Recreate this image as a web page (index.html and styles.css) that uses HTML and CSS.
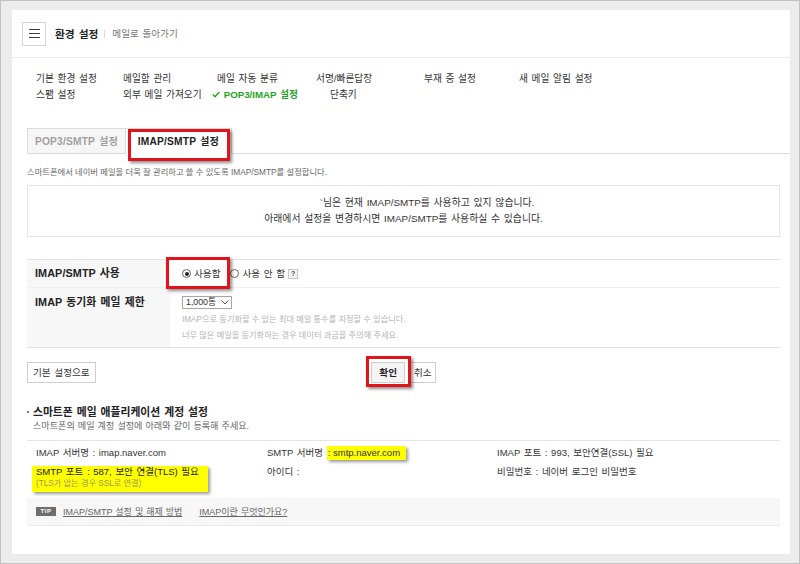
FILE: index.html
```html
<!DOCTYPE html>
<html lang="ko">
<head>
<meta charset="utf-8">
<title>환경 설정</title>
<link rel="stylesheet" href="styles.css">
</head>
<body>
<div class="panel">
  <header class="top">
    <button class="menu-btn" type="button"><span></span><span></span><span></span></button>
    <h1 class="title">환경 설정</h1>
    <span class="sep"></span>
    <a class="back" href="#">메일로 돌아가기</a>
  </header>

  <nav class="gnb">
    <div class="gnb-row">
      <a href="#">기본 환경 설정</a>
      <a href="#">메일함 관리</a>
      <a href="#">메일 자동 분류</a>
      <a href="#">서명/빠른답장</a>
      <a href="#">부재 중 설정</a>
      <a href="#">새 메일 알림 설정</a>
    </div>
    <div class="gnb-row">
      <a href="#">스팸 설정</a>
      <a href="#">외부 메일 가져오기</a>
      <a href="#" class="on"><svg class="chk" width="8" height="7" viewBox="0 0 8 7"><polyline points="0.8,3.6 3,5.8 7.3,1" fill="none" stroke="#1ea51e" stroke-width="1.4"/></svg> POP3/IMAP 설정</a>
      <a href="#" class="shift">단축키</a>
    </div>
  </nav>

  <main class="main">
    <div class="tabs">
      <a href="#" class="tab">POP3/SMTP 설정</a>
      <a href="#" class="tab active">IMAP/SMTP 설정<span class="annot annot-tab"></span></a>
    </div>

    <p class="desc">스마트폰에서 네이버 메일을 더욱 잘 관리하고 쓸 수 있도록 IMAP/SMTP를 설정합니다.</p>

    <div class="notice">
      <p><span class="name-mask"></span>`님은 현재 IMAP/SMTP를 사용하고 있지 않습니다.</p>
      <p>아래에서 설정을 변경하시면 IMAP/SMTP를 사용하실 수 있습니다.</p>
    </div>

    <div class="settings">
      <div class="row r1">
        <div class="th">IMAP/SMTP 사용</div>
        <div class="td">
          <label class="radio"><span class="rb checked"></span>사용함</label>
          <label class="radio radio-off"><span class="rb"></span>사용 안 함</label>
          <span class="help">?</span>
          <span class="annot annot-radio"></span>
        </div>
      </div>
      <div class="row r2">
        <div class="th">IMAP 동기화 메일 제한</div>
        <div class="td">
          <div class="select"><span>1,000통</span><svg width="8" height="5" viewBox="0 0 8 5"><polyline points="0.5,0.5 4,4 7.5,0.5" fill="none" stroke="#555" stroke-width="1"/></svg></div>
          <p class="hint">IMAP으로 동기화할 수 있는 최대 메일 통수를 지정할 수 있습니다.<br>너무 많은 메일을 동기화하는 경우 데이터 과금을 주의해 주세요.</p>
        </div>
      </div>
    </div>

    <div class="btns">
      <button type="button" class="btn btn-reset">기본 설정으로</button>
      <div class="btn-group">
        <button type="button" class="btn btn-ok">확인<span class="annot annot-ok"></span></button>
        <button type="button" class="btn btn-cancel">취소</button>
      </div>
    </div>

    <h2 class="sec-title"><span class="dot"></span>스마트폰 메일 애플리케이션 계정 설정</h2>
    <p class="sec-sub">스마트폰의 메일 계정 설정에 아래와 같이 등록해 주세요.</p>

    <div class="acct">
      <div>IMAP 서버명 : imap.naver.com</div>
      <div>SMTP 서버명 <span class="hl">: smtp.naver.com</span></div>
      <div>IMAP 포트 : 993, 보안연결(SSL) 필요</div>
      <div class="hl-block">SMTP 포트 : 587, 보안 연결(TLS) 필요<small>(TLS가 없는 경우 SSL로 연결)</small></div>
      <div class="lower">아이디 :</div>
      <div class="lower">비밀번호 : 네이버 로그인 비밀번호</div>
    </div>

    <div class="tip">
      <span class="badge">TIP</span>
      <a href="#">IMAP/SMTP 설정 및 해제 방법</a>
      <a href="#">IMAP이란 무엇인가요?</a>
    </div>
  </main>
</div>
</body>
</html>
```

FILE: styles.css
```css
* { box-sizing: border-box; }
html { background: #ececec; }
body {
  margin: 0;
  width: 800px;
  height: 564px;
  border: 1px solid #c2c2c2;
  background: #ececec;
  padding: 9px 9px 9px 11px;
  font-family: "Liberation Sans", "Noto Sans CJK KR", sans-serif;
  font-size: 9.6px;
  line-height: 14px;
  color: #2c2c2c;
  word-spacing: 1px;
}
a { color: inherit; text-decoration: none; }
p, h1, h2 { margin: 0; }

.panel { background: #fff; height: 100%; }

/* header */
.top {
  height: 48px;
  border-bottom: 1px solid #ececec;
  display: flex;
  align-items: center;
  padding-left: 10px;
}
.menu-btn {
  width: 24px;
  height: 24px;
  border: 1px solid #d6d6d6;
  background: #fff;
  padding: 0;
  display: flex;
  flex-direction: column;
  justify-content: center;
  align-items: center;
  gap: 3px;
}
.menu-btn span { display: block; width: 11px; height: 1px; background: #3c3c3c; }
.title { font-size: 10.7px; font-weight: bold; color: #222; margin-left: 9px; }
.sep { width: 1px; height: 8px; background: #d8d8d8; margin: 0 7px 0 6px; }
.back { color: #777; }

/* nav */
.gnb { padding: 13px 0 0 24px; line-height: 16px; font-size: 9.7px; color: #333; }
.gnb-row { display: grid; grid-template-columns: 87px 94px 99px 108px 95px auto; }
.gnb .on { color: #1ea51e; font-weight: bold; margin-left: -5px; white-space: nowrap; }
.gnb .chk { vertical-align: 0; }
.gnb .shift { margin-left: 14px; }

/* main */
.main { padding: 0 10px 0 15px; }

.tabs {
  display: flex;
  align-items: flex-end;
  height: 26px;
  border-bottom: 1px solid #dcdcdc;
  margin: 25px -10px 0 0;
}
.tab {
  width: 99px;
  height: 25px;
  border: 1px solid #dcdcdc;
  border-bottom: none;
  background: #f6f6f6;
  color: #a0a0a0;
  font-size: 10.2px;
  font-weight: bold;
  letter-spacing: .2px;
  text-align: center;
  line-height: 25px;
  white-space: nowrap;
}
.tab.active {
  width: 107px;
  height: 26px;
  margin-left: -1px;
  margin-bottom: -1px;
  background: #fff;
  color: #222;
  position: relative;
}

.annot {
  position: absolute;
  border: 3px solid #e1141c;
  box-shadow: 2px 2px 3px rgba(0,0,0,.45);
  pointer-events: none;
}
.annot-tab { left: 2px; top: 0; width: 102px; height: 32px; }
.annot-radio { left: -4px; top: -3px; width: 64px; height: 32px; }
.annot-ok { left: -6px; top: -7px; width: 45px; height: 31px; }

.desc {
  margin-top: 12px;
  font-size: 8.3px;
  line-height: 12px;
  color: #666;
  word-spacing: 0;
}

.notice {
  margin-top: 7px;
  border: 1px solid #e5e5e5;
  padding: 9px 0;
  text-align: center;
  font-size: 9.85px;
  line-height: 16px;
  color: #333;
}
.name-mask { display: inline-block; width: 47px; }

/* settings table */
.settings {
  margin-top: 22px;
  border-top: 1px solid #e2e2e2;
  border-bottom: 1px solid #e2e2e2;
}
.row { display: grid; grid-template-columns: 143px 1fr; }
.row + .row { border-top: 1px solid #efefef; }
.th {
  background: #f7f7f7;
  padding-left: 8px;
  font-size: 10.8px;
  font-weight: bold;
  color: #222;
  letter-spacing: .1px;
  white-space: nowrap;
}
.r1 { height: 27px; }
.r1 .th { line-height: 27px; }
.r1 .td { display: flex; align-items: center; padding-left: 12px; position: relative; }
.r2 .th { padding-top: 7px; line-height: 14px; }
.r2 .td { padding: 8px 0 3px 12px; }

.radio { display: inline-flex; align-items: center; color: #333; }
.radio-off { margin-left: 10px; }
.rb {
  width: 9px;
  height: 9px;
  border: 1px solid #666;
  border-radius: 50%;
  margin-right: 3px;
  display: flex;
  align-items: center;
  justify-content: center;
  background: #fff;
}
.rb.checked::after {
  content: "";
  width: 4px;
  height: 4px;
  border-radius: 50%;
  background: #222;
}
.help {
  width: 10px;
  height: 10px;
  margin-left: 3px;
  border: 1px solid #c9c9c9;
  background: #f4f4f4;
  font-size: 7px;
  font-weight: bold;
  line-height: 8px;
  text-align: center;
  color: #555;
}

.select {
  width: 50px;
  height: 13px;
  border: 1px solid #a6a6a6;
  display: flex;
  align-items: center;
  justify-content: space-between;
  padding: 0 2px 0 3px;
  font-size: 8.8px;
  line-height: 11px;
  color: #333;
  white-space: nowrap;
  word-spacing: 0;
}
.hint {
  margin-top: 3px;
  font-size: 8.2px;
  line-height: 16px;
  color: #b3b3b3;
  word-spacing: 0;
}

/* buttons */
.btns {
  display: grid;
  grid-template-columns: 1fr auto 1fr;
  align-items: center;
  margin-top: 14px;
}
.btn {
  height: 21px;
  border: 1px solid #cdcdcd;
  background: #fff;
  font: inherit;
  word-spacing: inherit;
  color: #333;
  padding: 0 5px;
  line-height: 19px;
  white-space: nowrap;
}
.btn-reset { justify-self: start; }
.btn-group { display: flex; gap: 5px; }
.btn-ok { font-weight: bold; background: #f4f4f4; padding: 0 7px; position: relative; color: #222; }
.btn-cancel { padding: 0 3px; }

/* section */
.sec-title {
  margin-top: 22px;
  font-size: 10.8px;
  font-weight: bold;
  line-height: 14px;
  color: #222;
}
.dot {
  display: inline-block;
  width: 2px;
  height: 2px;
  background: #777;
  margin-right: 4px;
  vertical-align: 3px;
}
.sec-sub {
  padding-left: 6px;
  font-size: 9.1px;
  line-height: 14px;
  color: #666;
  word-spacing: .5px;
}

.acct {
  margin-top: 7px;
  border-top: 1px solid #e5e5e5;
  display: grid;
  grid-template-columns: 231px 230px 1fr;
  row-gap: 6px;
  padding: 5px 0 0 9px;
  align-items: start;
  color: #333;
  font-size: 9.5px;
}
.hl {
  display: inline-block;
  background: #ffff00;
  box-shadow: 2px 2px 3px rgba(0,0,0,.4);
  padding: 0 6px 0 1px;
  line-height: 14px;
  word-spacing: 0;
}
.hl-block {
  justify-self: start;
  background: #ffff00;
  box-shadow: 2px 2px 3px rgba(0,0,0,.4);
  margin-left: -4px;
  padding: 0 9px 2px 4px;
  line-height: 12px;
  color: #222;
}
.hl-block small {
  display: block;
  font-size: 8.2px;
  color: #9a9a55;
  word-spacing: 0;
}
.lower { line-height: 12px; }

.tip {
  margin-top: 6px;
  height: 28px;
  background: #f7f7f7;
  border-bottom: 1px solid #ececec;
  display: flex;
  align-items: center;
  padding-left: 9px;
  font-size: 9px;
  color: #666;
  word-spacing: .5px;
}
.badge {
  width: 20px;
  height: 9px;
  background: #6e6e6e;
  color: #fff;
  font-size: 6px;
  font-weight: bold;
  line-height: 9px;
  text-align: center;
  letter-spacing: .5px;
  margin-right: 7px;
  word-spacing: 0;
}
.tip a { text-decoration: underline; margin-right: 17px; }
```
